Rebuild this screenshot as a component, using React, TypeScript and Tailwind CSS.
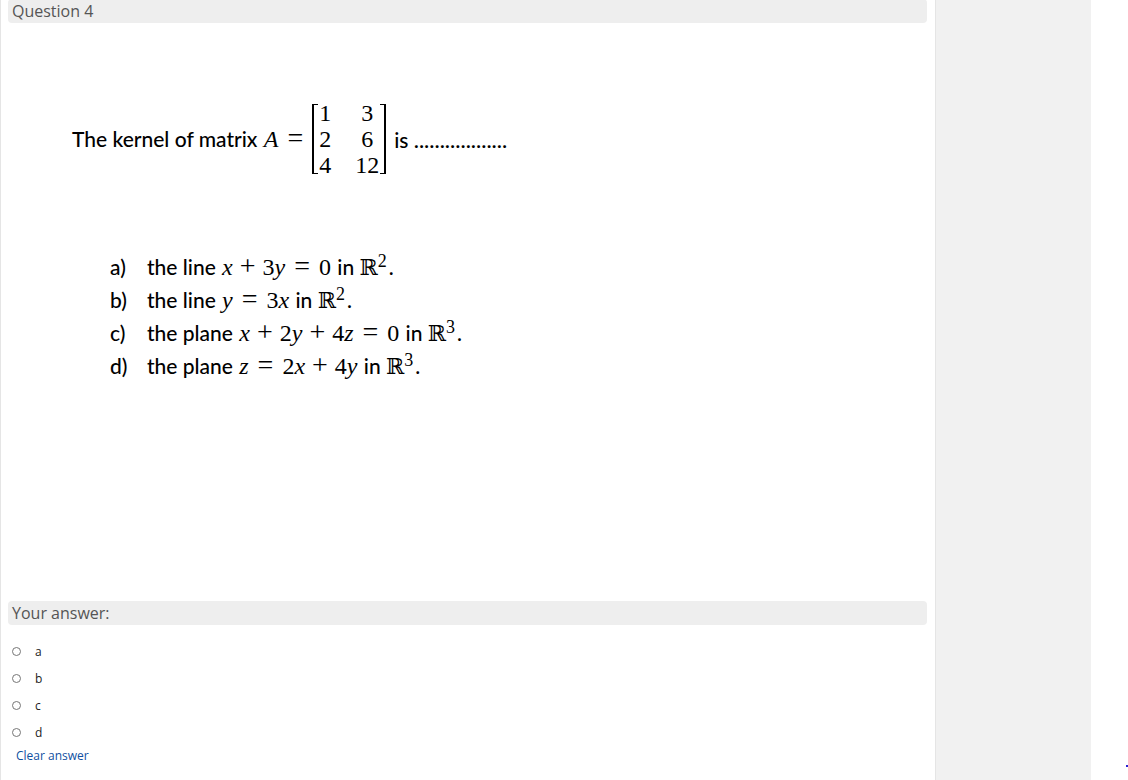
import React, { useState } from 'react';

const matrix = [
  ['1', '3'],
  ['2', '6'],
  ['4', '12'],
];

const options = ['a', 'b', 'c', 'd'];

// Inline math text
const M: React.FC<{ children: React.ReactNode }> = ({ children }) => (
  <span className="mx-px font-['Liberation_Serif',serif] text-[24px] leading-6">{children}</span>
);

// Operators with math spacing around them
const Plus: React.FC = () => (
  <span className="mx-1.5 font-['Liberation_Serif',serif] text-[28px] leading-6">+</span>
);

const Eq: React.FC = () => (
  <span className="mx-2 font-['Liberation_Serif',serif] text-[28px] leading-6">=</span>
);

// Real space of a given dimension
const Space: React.FC<{ dim: number }> = ({ dim }) => (
  <span className="mr-0.5 font-['DejaVu_Serif',serif] text-[22px] leading-6">
    ℝ
    <sup className="-top-2 align-baseline font-['Liberation_Serif',serif] text-[18px]">{dim}</sup>
  </span>
);

const SectionBar: React.FC<{ children: React.ReactNode }> = ({ children }) => (
  <h2 className="rounded bg-[#eeeeee] px-1 text-[16px] leading-6 text-[#555555]">{children}</h2>
);

const MatrixA: React.FC = () => (
  <div className="ml-px flex items-stretch">
    <div className="my-1 w-1.5 border-y border-l-2 border-black" />
    <div className="grid grid-cols-[auto_auto] gap-x-6 px-px text-center font-['Liberation_Serif',serif] text-[24px] leading-[26px]">
      {matrix.flat().map((value) => (
        <span key={value}>{value}</span>
      ))}
    </div>
    <div className="my-1 w-1.5 border-y border-r-2 border-black" />
  </div>
);

const Choice: React.FC<{ label: string; children: React.ReactNode }> = ({ label, children }) => (
  <li className="flex h-[33px] items-baseline">
    <span className="w-[37px]">{label})</span>
    <span className="whitespace-pre">{children}</span>
  </li>
);

const App: React.FC = () => {
  const [answer, setAnswer] = useState('');

  return (
    <div className="flex min-h-screen bg-white font-['Open_Sans',sans-serif]">
      <main className="flex-1 border-x border-[#e5e5e5] pr-2 pl-[7px]">
        <div className="-mt-px">
          <SectionBar>Question 4</SectionBar>
        </div>

        {/* Question body */}
        <section className="h-[578px] pt-[77px] pl-16 font-['Lato',sans-serif] text-[21px] font-medium text-black">
          <div className="flex items-center">
            <p className="whitespace-pre">
              The kernel of matrix <M><i>A</i></M><Eq />
            </p>
            <MatrixA />
            <p className="ml-2 whitespace-pre">is <span className="text-[22px]">..................</span></p>
          </div>

          <ol className="mt-[72px] pl-[38px] leading-[33px]">
            <Choice label="a">
              the line <M><i>x</i></M><Plus /><M>3<i>y</i></M><Eq /><M>0</M> in <Space dim={2} />.
            </Choice>
            <Choice label="b">
              the line <M><i>y</i></M><Eq /><M>3<i>x</i></M> in <Space dim={2} />.
            </Choice>
            <Choice label="c">
              the plane <M><i>x</i></M><Plus /><M>2<i>y</i></M><Plus /><M>4<i>z</i></M><Eq /><M>0</M> in <Space dim={3} />.
            </Choice>
            <Choice label="d">
              the plane <M><i>z</i></M><Eq /><M>2<i>x</i></M><Plus /><M>4<i>y</i></M> in <Space dim={3} />.
            </Choice>
          </ol>
        </section>

        <SectionBar>Your answer:</SectionBar>

        {/* Answer options */}
        <div className="mt-[13px] pl-1 text-[12px] text-[#222222]">
          {options.map((option) => (
            <label key={option} className="flex h-[27px] items-center gap-3.5">
              <input
                type="radio"
                name="answer"
                value={option}
                checked={answer === option}
                onChange={() => setAnswer(option)}
                className="size-[9px] appearance-none rounded-full border border-[#767676] bg-white checked:bg-[#767676]"
              />
              {option}
            </label>
          ))}
          <button
            type="button"
            onClick={() => setAnswer('')}
            className="block pl-1 text-[12px] leading-5 text-[#0f4f9f] hover:underline"
          >
            Clear answer
          </button>
        </div>
      </main>

      <aside className="w-[155px] bg-[#f1f1f1]" />
      <div className="flex w-[37px] items-end justify-end pb-[13px]">
        <span className="size-0.5 bg-[#2a1fd0]" />
      </div>
    </div>
  );
};

export default App;
